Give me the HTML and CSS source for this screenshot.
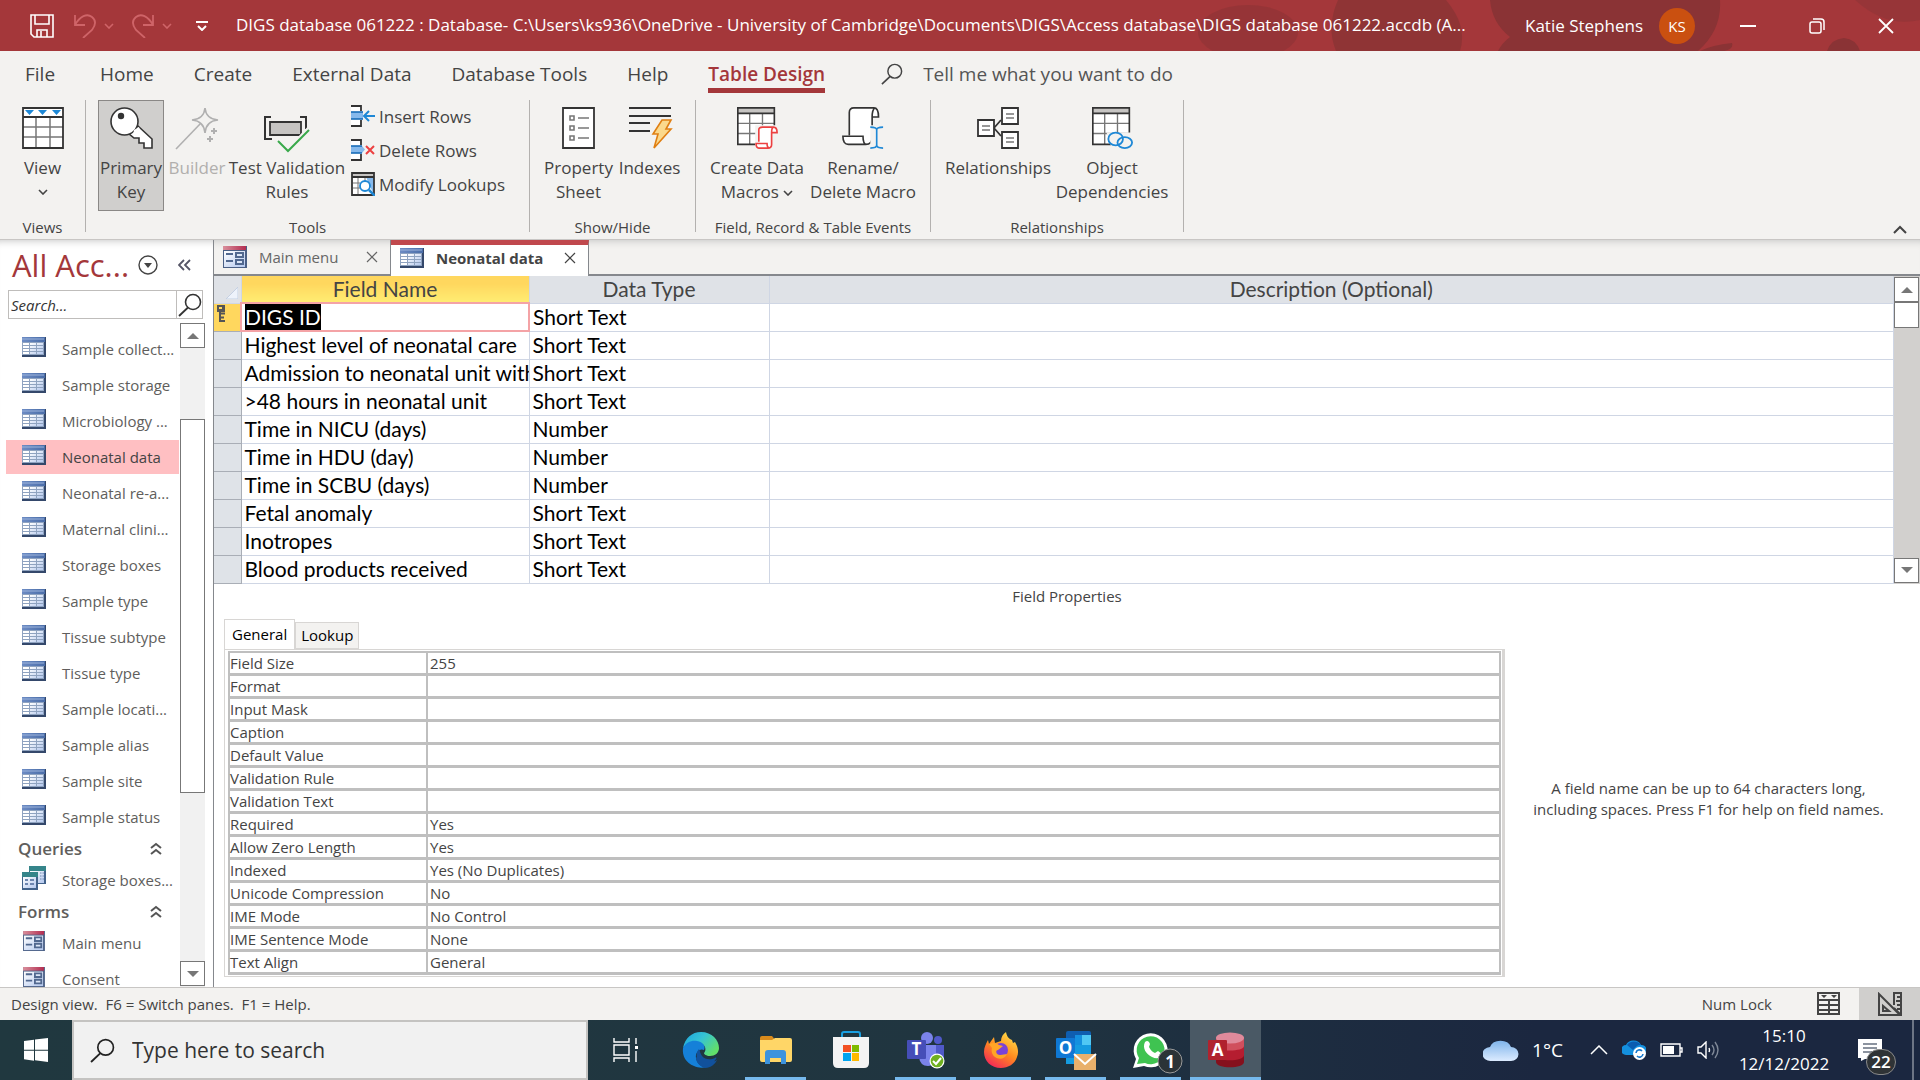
FILE: index.html
```
<!DOCTYPE html>
<html lang="en">
<head>
  <meta charset="UTF-8">
  <meta name="viewport" content="width=device-width, initial-scale=1.0">
  <title>DIGS database 061222</title>
  <link rel="stylesheet" href="styles.css">
</head>
<body>
  <!-- Shared icons -->
  <svg class="icon-defs" aria-hidden="true">
    <defs>
      <linearGradient id="cell" x1="0" y1="0" x2="1" y2="1"><stop offset="0" stop-color="#fff"/><stop offset="1" stop-color="#b4c8ee"/></linearGradient>
      <linearGradient id="head" x1="0" y1="0" x2="1" y2="0"><stop offset="0" stop-color="#6d8cc4"/><stop offset="1" stop-color="#4a6da8"/></linearGradient>
      <linearGradient id="form-head" x1="0" y1="0" x2="1" y2="0"><stop offset="0" stop-color="#d9909c"/><stop offset="1" stop-color="#b32c50"/></linearGradient>
    </defs>
    <symbol id="i-table" viewBox="0 0 24 20">
      <rect width="24" height="20" fill="#34486b"/>
      <rect width="22" height="18" fill="#8fa3c0"/>
      <rect width="23" height="5" fill="url(#head)"/>
      <path d="M0 2h22" stroke="#9db4dc" stroke-width="1"/>
      <path d="M1 6h6v2H1zM1 9h6v2H1zM1 12h6v2H1zM1 15h6v2H1z" fill="#fff"/>
      <path d="M8 6h6v2H8zM15 6h6v2h-6zM8 9h6v2H8zM15 9h6v2h-6zM8 12h6v2H8zM15 12h6v2h-6zM8 15h6v2H8zM15 15h6v2h-6z" fill="url(#cell)"/>
    </symbol>
    <symbol id="i-form" viewBox="0 0 24 22">
      <rect width="24" height="22" fill="#4a5f85"/>
      <rect x="1" y="5" width="21" height="16" fill="url(#cell)"/>
      <rect width="23" height="4" fill="url(#form-head)"/>
      <path d="M3 8h7M3 15h7" stroke="#51688f" stroke-width="2"/>
      <path d="M13 7h7v4h-7zM13 14h7v4h-7z" fill="#dce6f7" stroke="#51688f" stroke-width="2"/>
    </symbol>
    <symbol id="i-query" viewBox="0 0 24 24">
      <rect x="7" width="17" height="18" fill="#42628b"/>
      <rect x="8" y="5" width="14" height="12" fill="url(#cell)"/>
      <rect x="7" width="17" height="5" fill="#35858a"/>
      <path d="M18 7h4M18 10h4M18 13h4" stroke="#6d86b0" stroke-dasharray="1.500 1"/>
      <rect y="6" width="16" height="18" fill="#42628b"/>
      <rect x="1" y="11" width="13" height="11" fill="url(#cell)"/>
      <rect y="6" width="16" height="5" fill="#35858a"/>
      <path d="M3 14h3M8 14h4M3 18h3M8 18h4" stroke="#6d86b0" stroke-width="2"/>
    </symbol>
    <symbol id="i-search" viewBox="0 0 24 24">
      <circle cx="15" cy="9" r="7.500" fill="none" stroke="currentColor" stroke-width="1.600"/>
      <path d="M10 14.500 1 23" stroke="currentColor" stroke-width="1.800"/>
    </symbol>
    <symbol id="i-up" viewBox="0 0 12 6"><path d="M6 0l6 6H0z" fill="#777"/></symbol>
    <symbol id="i-down" viewBox="0 0 12 6"><path d="M0 0h12L6 6z" fill="#777"/></symbol>
    <symbol id="i-chevron" viewBox="0 0 10 6"><path d="M1 1l4 4 4-4" fill="none" stroke="currentColor" stroke-width="1.600"/></symbol>
    <symbol id="i-collapse" viewBox="0 0 12 14"><path d="M1 6l5-4 5 4M1 12l5-4 5 4" fill="none" stroke="#555" stroke-width="2"/></symbol>
    <symbol id="i-close" viewBox="0 0 12 12"><path d="M1 1l10 10M11 1L1 11" fill="none" stroke="currentColor" stroke-width="1.200"/></symbol>
  </svg>

  <!-- Title bar -->
  <header class="titlebar">
    <svg class="titlebar-art" viewBox="0 0 740 51" preserveAspectRatio="xMaxYMid slice" aria-hidden="true">
      <g fill="#8a3335">
        <path d="M310 0h230q2 30-22 51H318q4-8 12-14-18-14-20-37z"/>
        <path d="M158 0h108q22 26 14 51H156q-10-24 2-51z" opacity=".8"/>
        <ellipse cx="68" cy="32" rx="50" ry="27" opacity=".55"/>
        <path d="M520 51q12-6 32-8 2 6-8 8zM647 51q4-12 17-13 12 1 16 13z"/>
        <path d="M675 0h65v20q-34 8-65-20z" opacity=".5"/>
      </g>
    </svg>
    <div class="quick">
      <button class="bare" aria-label="Save"><svg width="24" height="24" viewBox="0 0 24 24" fill="none" stroke="#fff" stroke-width="1.600"><path d="M1 1h22v22H4l-3-3zM5 1v9h14V1M7 23v-7h10v7M11 17v6"/></svg></button>
      <button class="bare faded undo" aria-label="Undo"><svg width="22" height="24" viewBox="0 0 22 24" fill="none" stroke="currentColor" stroke-width="1.800"><path d="M1 1v10h10M1 11C6 2 13-1 18 3s3 9 0 13l-9 8"/></svg></button>
      <button class="bare faded" aria-label="Undo list"><svg width="10" height="6"><use href="#i-chevron"/></svg></button>
      <button class="bare faded redo" aria-label="Redo"><svg width="22" height="24" viewBox="0 0 22 24" fill="none" stroke="currentColor" stroke-width="1.800"><path d="M21 1v10H11M21 11C16 2 9-1 4 3s-3 9 0 13l9 8"/></svg></button>
      <button class="bare faded" aria-label="Redo list"><svg width="10" height="6"><use href="#i-chevron"/></svg></button>
      <button class="bare customize" aria-label="Customize toolbar"><svg width="12" height="10" viewBox="0 0 12 10" fill="none" stroke="#fff" stroke-width="2"><path d="M0 1h12M2 5l4 4 4-4"/></svg></button>
    </div>
    <div class="title">DIGS database 061222 : Database- C:\Users\ks936\OneDrive - University of Cambridge\Documents\DIGS\Access database\DIGS database 061222.accdb (A...</div>
    <div class="account">
      <span>Katie Stephens</span>
      <span class="avatar">KS</span>
    </div>
    <div class="window-buttons">
      <button class="bare" aria-label="Minimize"><svg width="16" height="16" viewBox="0 0 16 16"><path d="M0 8h16" stroke="#fff" stroke-width="2"/></svg></button>
      <button class="bare" aria-label="Restore"><svg width="16" height="16" viewBox="0 0 16 16" fill="none" stroke="#fff" stroke-width="1.500"><rect x="1" y="4" width="11" height="11" rx="2"/><path d="M4 1h8q3 0 3 3v8"/></svg></button>
      <button class="bare" aria-label="Close"><svg width="16" height="16" viewBox="0 0 16 16"><path d="M1 1l14 14M15 1L1 15" stroke="#fff" stroke-width="1.800"/></svg></button>
    </div>
  </header>

  <!-- Ribbon -->
  <nav class="tabs">
    <a href="#" class="file">File</a>
    <a href="#">Home</a>
    <a href="#">Create</a>
    <a href="#">External Data</a>
    <a href="#">Database Tools</a>
    <a href="#">Help</a>
    <a href="#" class="active">Table Design</a>
    <label class="tell-me">
      <svg width="22" height="22"><use href="#i-search"/></svg>
      <input type="text" placeholder="Tell me what you want to do">
    </label>
  </nav>

  <section class="ribbon">
    <div class="group views">
      <div class="tools">
        <button class="tool">
          <svg width="42" height="42" viewBox="0 0 42 42"><path d="M1 1h40v40H1z" fill="#fff"/><path d="M14 10v31M28 10v31M1 20h40M1 30h40" stroke="#777" stroke-width="1.500"/><path d="M1 1h40v40H1zM1 10h40" fill="none" stroke="#333" stroke-width="1.800"/><path d="M3 3h9L7.500 8zM16 3h9l-4.500 5zM30 3h9l-4.500 5z" fill="#1e88d6"/></svg>
          <span>View</span>
          <svg class="drop" width="10" height="6"><use href="#i-chevron"/></svg>
        </button>
      </div>
      <div class="group-name">Views</div>
    </div>

    <div class="group design">
      <div class="tools">
        <button class="tool pressed">
          <svg width="42" height="42" viewBox="0 0 42 42"><path d="M28 19l14 13v9h-8v-5h-5v-5h-5l-6-5z" fill="#fff" stroke="#333" stroke-width="1.600"/><circle cx="14.500" cy="14.500" r="13.500" fill="#fff" stroke="#333" stroke-width="1.600"/><path d="M24 23l5-3 1 4-7 4z" fill="#fff"/><circle cx="11" cy="9" r="3.200" fill="#333"/></svg>
          <span>Primary<br>Key</span>
        </button>
        <button class="tool disabled">
          <svg width="42" height="42" viewBox="0 0 42 42" fill="none" stroke="#b0b0b0" stroke-width="1.600"><path d="M0 42l25-26"/><path d="M29 1q1 11 13 12-12 1-13 13-1-12-13-13 12-1 13-12z" fill="#f3f2f0"/><path d="M38 21v6M35 24h6M34 29v6M31 32h6" stroke-width="2"/></svg>
          <span>Builder</span>
        </button>
        <button class="tool validation">
          <svg width="46" height="42" viewBox="0 0 46 42" fill="none"><path d="M7 10H1v22h7M36 10h6v12" stroke="#333" stroke-width="2"/><path d="M6 15h31v13H6z" fill="#c6c4c2" stroke="#333" stroke-width="1.800"/><path d="M14 33l10 11 21-22" stroke="#f3f2f0" stroke-width="5"/><path d="M14 34l10 10 21-21" stroke="#39a94b" stroke-width="2"/></svg>
          <span>Test Validation<br>Rules</span>
        </button>
        <div class="row-tools">
          <button class="bare"><svg width="24" height="24" viewBox="0 0 24 24"><path d="M0 2h10v20H0" fill="#fff" stroke="#333" stroke-width="1.800"/><path d="M0 7h14v9H0z" fill="#f3f2f0"/><path d="M0 8h12v7H0z" fill="#86b9ec"/><path d="M0 8h12M0 15h12" stroke="#0f67b5" stroke-width="1.500"/><path d="M24 12H14M18 7l-5 5 5 5" fill="none" stroke="#1e88d6" stroke-width="2"/></svg>Insert Rows</button>
          <button class="bare"><svg width="24" height="24" viewBox="0 0 24 24"><path d="M0 2h10v20H0" fill="#fff" stroke="#333" stroke-width="1.800"/><path d="M0 7h14v9H0z" fill="#f3f2f0"/><path d="M0 8h11l3 3.500-3 3.500H0z" fill="#86b9ec"/><path d="M0 8h11M0 15h11" stroke="#0f67b5" stroke-width="1.500"/><path d="M15 8l8 8M23 8l-8 8" fill="none" stroke="#ec4141" stroke-width="2"/></svg>Delete Rows</button>
          <button class="bare"><svg width="24" height="24" viewBox="0 0 24 24"><path d="M1 1h22v22H1z" fill="#fff"/><path d="M15 5h8v18z" fill="#86b9ec"/><path d="M7 6v16M2 11h7M2 16h7M14 6v4" stroke="#777"/><path d="M1 1h22v4H1z" fill="#c6c4c2"/><path d="M1 1h22v22H1zM1 5h22" fill="none" stroke="#333" stroke-width="1.800"/><circle cx="14" cy="14" r="5" fill="#fff" stroke="#1e88d6" stroke-width="1.800"/><path d="M18 18l6 6" stroke="#1e88d6" stroke-width="2.500"/></svg>Modify Lookups</button>
        </div>
      </div>
      <div class="group-name">Tools</div>
    </div>

    <div class="group show-hide">
      <div class="tools">
        <button class="tool">
          <svg width="42" height="42" viewBox="0 0 42 42" fill="none"><path d="M5 1h31v40H5z" fill="#fff" stroke="#333" stroke-width="1.800"/><path d="M12 9h4v4h-4zM12 19h4v4h-4zM12 29h4v4h-4zM20 11h11M20 21h11M20 31h11" stroke="#777" stroke-width="1.600"/></svg>
          <span>Property<br>Sheet</span>
        </button>
        <button class="tool">
          <svg width="42" height="42" viewBox="0 0 42 42"><path d="M0 1h42M0 9h42M0 16h21M0 24h21" stroke="#333" stroke-width="1.800"/><path d="M33 13h9l-5 9h5L25 41l4-14h-5z" fill="#fbd98c" stroke="#e07f12" stroke-width="1.600"/></svg>
          <span>Indexes</span>
        </button>
      </div>
      <div class="group-name">Show/Hide</div>
    </div>

    <div class="group events">
      <div class="tools">
        <button class="tool">
          <svg width="46" height="46" viewBox="0 0 46 46" fill="none"><path d="M2 1h40v40H2z" fill="#fff"/><path d="M2 1h40v6H2z" fill="#c6c4c2"/><path d="M15 7v34M29 7v34M2 18h40M2 29h40" stroke="#777" stroke-width="1.500"/><path d="M2 1h40v40H2zM2 7h40" stroke="#333" stroke-width="1.800"/><path d="M21 20h26v26H21z" fill="#f3f2f0"/><path d="M25 38V25q0-3 4-3h12q4 0 4 6h-6v13q0 4-4 4H25q-3 0-3-5h12q0 5 3 5M41 22q-2 1-2 6" fill="#fff" stroke="#ec4141" stroke-width="1.800"/></svg>
          <span>Create Data<br>Macros <svg width="10" height="6"><use href="#i-chevron"/></svg></span>
        </button>
        <button class="tool">
          <svg width="46" height="46" viewBox="0 0 46 46" fill="none"><path d="M8 31V6q0-5 5-5h22q5 0 5 10h-7v22q0 8-7 8H7q-6 0-6-9h22q0 9 4 9M36 1q-3 2-3 10" fill="#fff" stroke="#333" stroke-width="1.800"/><path d="M31 20h16v26H31z" fill="#f3f2f0"/><path d="M31 22q7 0 7 3v17q0 3-7 3M45 22q-7 0-7 3v17q0 3 7 3" stroke="#1e88d6" stroke-width="1.800"/></svg>
          <span>Rename/<br>Delete Macro</span>
        </button>
      </div>
      <div class="group-name">Field, Record &amp; Table Events</div>
    </div>

    <div class="group relations">
      <div class="tools">
        <button class="tool">
          <svg width="42" height="42" viewBox="0 0 42 42"><g fill="#fff" stroke="#333" stroke-width="1.800"><path d="M17 21l7-8M17 21l7 8" fill="none"/><path d="M1 13h16v16H1zM25 1h16v16H25zM25 25h16v16H25z"/></g><path d="M5 19h8M5 23h8M29 7h8M29 11h8M29 31h8M29 35h8" stroke="#777" stroke-width="1.500"/></svg>
          <span>Relationships</span>
        </button>
        <button class="tool">
          <svg width="46" height="46" viewBox="0 0 46 46" fill="none"><path d="M2 1h40v40H2z" fill="#fff"/><path d="M2 1h40v6H2z" fill="#c6c4c2"/><path d="M15 7v34M29 7v34M2 18h40M2 29h40" stroke="#777" stroke-width="1.500"/><path d="M2 1h40v40H2zM2 7h40" stroke="#333" stroke-width="1.800"/><path d="M17 28h30v18H23z" fill="#f3f2f0"/><g stroke="#1e88d6" stroke-width="2"><ellipse cx="27" cy="35" rx="8" ry="7"/><ellipse cx="37" cy="39" rx="8" ry="6"/></g></svg>
          <span>Object<br>Dependencies</span>
        </button>
      </div>
      <div class="group-name">Relationships</div>
    </div>

    <button class="bare collapse" aria-label="Collapse ribbon"><svg width="14" height="9" viewBox="0 0 14 9"><path d="M1 8l6-6 6 6" fill="none" stroke="#444" stroke-width="2"/></svg></button>
  </section>

  <main class="workspace">
    <!-- Navigation pane -->
    <aside class="nav-pane">
      <div class="nav-title">
        <h1>All Acc...</h1>
        <button class="bare" aria-label="Object filter"><svg width="20" height="20" viewBox="0 0 20 20"><circle cx="10" cy="10" r="9" fill="none" stroke="#444" stroke-width="1.400"/><path d="M6 8h8l-4 5z" fill="#444"/></svg></button>
        <button class="bare shutter" aria-label="Hide pane"><svg width="13" height="12" viewBox="0 0 13 12" fill="none" stroke="#555566" stroke-width="1.800"><path d="M6 1L1 6l5 5M12 1L7 6l5 5"/></svg></button>
      </div>
      <div class="nav-search">
        <input type="text" placeholder="Search..." aria-label="Search">
        <button class="bare" aria-label="Run search"><svg width="24" height="24"><use href="#i-search"/></svg></button>
      </div>
      <div class="nav-body">
        <div class="nav-list">
          <a href="#"><svg width="24" height="20"><use href="#i-table"/></svg>Sample collect...</a>
          <a href="#"><svg width="24" height="20"><use href="#i-table"/></svg>Sample storage</a>
          <a href="#"><svg width="24" height="20"><use href="#i-table"/></svg>Microbiology ...</a>
          <a href="#" class="selected"><svg width="24" height="20"><use href="#i-table"/></svg>Neonatal data</a>
          <a href="#"><svg width="24" height="20"><use href="#i-table"/></svg>Neonatal re-a...</a>
          <a href="#"><svg width="24" height="20"><use href="#i-table"/></svg>Maternal clini...</a>
          <a href="#"><svg width="24" height="20"><use href="#i-table"/></svg>Storage boxes</a>
          <a href="#"><svg width="24" height="20"><use href="#i-table"/></svg>Sample type</a>
          <a href="#"><svg width="24" height="20"><use href="#i-table"/></svg>Tissue subtype</a>
          <a href="#"><svg width="24" height="20"><use href="#i-table"/></svg>Tissue type</a>
          <a href="#"><svg width="24" height="20"><use href="#i-table"/></svg>Sample locati...</a>
          <a href="#"><svg width="24" height="20"><use href="#i-table"/></svg>Sample alias</a>
          <a href="#"><svg width="24" height="20"><use href="#i-table"/></svg>Sample site</a>
          <a href="#"><svg width="24" height="20"><use href="#i-table"/></svg>Sample status</a>
          <h2>Queries <svg width="12" height="14"><use href="#i-collapse"/></svg></h2>
          <a href="#"><svg width="24" height="24"><use href="#i-query"/></svg>Storage boxes...</a>
          <h2>Forms <svg width="12" height="14"><use href="#i-collapse"/></svg></h2>
          <a href="#"><svg width="24" height="20"><use href="#i-form"/></svg>Main menu</a>
          <a href="#"><svg width="24" height="20"><use href="#i-form"/></svg>Consent</a>
        </div>
        <div class="scrollbar nav-scroll">
          <button aria-label="Scroll up"><svg width="12" height="6"><use href="#i-up"/></svg></button>
          <div class="track"><div class="thumb"></div></div>
          <button aria-label="Scroll down"><svg width="12" height="6"><use href="#i-down"/></svg></button>
        </div>
      </div>
    </aside>

    <!-- Open table -->
    <section class="document">
      <div class="doc-tabs">
        <div class="doc-tab">
          <svg width="24" height="22"><use href="#i-form"/></svg>
          <span>Main menu</span>
          <button class="bare" aria-label="Close Main menu"><svg width="12" height="12"><use href="#i-close"/></svg></button>
        </div>
        <div class="doc-tab current">
          <svg width="24" height="20"><use href="#i-table"/></svg>
          <span>Neonatal data</span>
          <button class="bare" aria-label="Close Neonatal data"><svg width="12" height="12"><use href="#i-close"/></svg></button>
        </div>
      </div>

      <div class="grid-area">
        <table class="fields">
          <thead>
            <tr><th class="selector"><svg width="12" height="12" viewBox="0 0 12 12"><path d="M12 0v12H0z" fill="#eef3fb" stroke="#c5d0e2"/></svg></th><th class="name active">Field Name</th><th class="type">Data Type</th><th>Description (Optional)</th></tr>
          </thead>
          <tbody>
            <tr class="key"><td><svg width="10" height="18" viewBox="0 0 10 18"><path d="M0 0h8v7H0z" fill="#555"/><path d="M2 2h3v2H2z" fill="#ffd75e"/><path d="M3 7v10M3 8.500h5M3 12.500h4M3 16h5" stroke="#555" stroke-width="2"/></svg></td><td><mark>DIGS ID</mark></td><td>Short Text</td><td></td></tr>
            <tr><td></td><td>Highest level of neonatal care</td><td>Short Text</td><td></td></tr>
            <tr><td></td><td>Admission to neonatal unit with</td><td>Short Text</td><td></td></tr>
            <tr><td></td><td>&gt;48 hours in neonatal unit</td><td>Short Text</td><td></td></tr>
            <tr><td></td><td>Time in NICU (days)</td><td>Number</td><td></td></tr>
            <tr><td></td><td>Time in HDU (day)</td><td>Number</td><td></td></tr>
            <tr><td></td><td>Time in SCBU (days)</td><td>Number</td><td></td></tr>
            <tr><td></td><td>Fetal anomaly</td><td>Short Text</td><td></td></tr>
            <tr><td></td><td>Inotropes</td><td>Short Text</td><td></td></tr>
            <tr><td></td><td>Blood products received</td><td>Short Text</td><td></td></tr>
          </tbody>
        </table>
        <div class="scrollbar grid-scroll">
          <button aria-label="Scroll up"><svg width="12" height="6"><use href="#i-up"/></svg></button>
          <div class="track"><div class="thumb"></div></div>
          <button aria-label="Scroll down"><svg width="12" height="6"><use href="#i-down"/></svg></button>
        </div>
      </div>

      <h2 class="props-title">Field Properties</h2>
      <div class="props">
        <div class="props-left">
          <div class="props-tabs">
            <button class="on">General</button>
            <button>Lookup</button>
          </div>
          <div class="props-frame">
            <table class="props-table">
              <tr><th>Field Size</th><td>255</td></tr>
              <tr><th>Format</th><td></td></tr>
              <tr><th>Input Mask</th><td></td></tr>
              <tr><th>Caption</th><td></td></tr>
              <tr><th>Default Value</th><td></td></tr>
              <tr><th>Validation Rule</th><td></td></tr>
              <tr><th>Validation Text</th><td></td></tr>
              <tr><th>Required</th><td>Yes</td></tr>
              <tr><th>Allow Zero Length</th><td>Yes</td></tr>
              <tr><th>Indexed</th><td>Yes (No Duplicates)</td></tr>
              <tr><th>Unicode Compression</th><td>No</td></tr>
              <tr><th>IME Mode</th><td>No Control</td></tr>
              <tr><th>IME Sentence Mode</th><td>None</td></tr>
              <tr><th>Text Align</th><td>General</td></tr>
            </table>
          </div>
        </div>
        <p class="hint">A field name can be up to 64 characters long,<br>including spaces. Press F1 for help on field names.</p>
      </div>
    </section>
  </main>

  <footer class="status">
    <span class="message">Design view.&nbsp; F6 = Switch panes.&nbsp; F1 = Help.</span>
    <span>Num Lock</span>
    <div class="view-buttons">
      <button class="bare" aria-label="Datasheet view"><svg width="24" height="24" viewBox="0 0 24 24" fill="none" stroke="#444" stroke-width="2"><path d="M1 1h21v21H1zM1 8h21M1 13h21M1 18h21M12 8v14"/><path d="M4 3h6L7 6zM14 3h6l-3 3z" fill="#444" stroke="none"/></svg></button>
      <button class="bare active" aria-label="Design view"><svg width="24" height="24" viewBox="0 0 24 24" fill="none" stroke="#444" stroke-width="2"><path d="M1 2v21h21zM5 14v5h6zM16 13V1h7v22l-7-7M23 5h-4M23 9h-5M23 13h-4M23 17h-4"/></svg></button>
    </div>
  </footer>

  <!-- Windows taskbar -->
  <div class="taskbar">
    <button class="bare start" aria-label="Start"><svg width="24" height="24" viewBox="0 0 24 24" fill="#fff"><path d="M0 3l10-1.300v10H0zM11 1.500L24 0v11.700H11zM0 12.700h10v10L0 21.300zM11 12.700h13V24l-13-1.800z"/></svg></button>
    <label class="task-search">
      <svg width="25" height="25"><use href="#i-search"/></svg>
      <input type="text" placeholder="Type here to search">
    </label>
    <div class="apps">
      <button class="bare" aria-label="Task view"><svg width="26" height="24" viewBox="0 0 26 24" fill="none" stroke="#fff" stroke-width="1.400"><path d="M1 0v4h15V0M1 24v-4h15v4M1 7h15v10H1zM23 0v6M23 13v11"/><path d="M22 8h3v3h-3z" fill="#fff" stroke="none"/></svg></button>
      <button class="bare" aria-label="Edge"><svg width="38" height="38" viewBox="0 0 38 38">
        <defs><linearGradient id="edge-a" x1="0" y1="0" x2="1" y2=".6"><stop offset="0" stop-color="#1aa3df"/><stop offset=".5" stop-color="#36c3d4"/><stop offset="1" stop-color="#62e06a"/></linearGradient></defs>
        <path d="M1 17C3 7 10 1 19 1c11 0 18 8 18 16 0 5-4 8-9 8-4 0-6-2-6-3 1-1 2-3 1-6-2-5-16-7-22 1z" fill="url(#edge-a)"/>
        <path d="M1 17C4 11 10 9 15 10c6 1 9 5 7 9-4-2-9 2-8 8 1 6 6 9 10 9-3 1-8 1-12-1C4 32 0 25 1 17z" fill="#1580d8"/>
        <path d="M17 18c-4 4-3 12 3 15 5 2 11 0 14-5 1-1 0-2-1-1-4 2-10 2-13-2-2-3-2-5-3-7zM14 27c0 5 5 9 9 10 6 0 10-4 12-8-8 5-17 4-19-5z" fill="#11519c"/></svg></button>
      <button class="bare open" aria-label="File Explorer"><svg width="32" height="28" viewBox="0 0 32 28"><path d="M0 2q0-2 2-2h10l4 5H0z" fill="#d98b1c"/><path d="M0 4h12l3-2h15q2 0 2 2v20q0 2-2 2H2q-2 0-2-2z" fill="#ffd667"/><path d="M5 28V17q0-3 3-3h15q3 0 3 3v11h-5v-6H10v6z" fill="#3d93dd"/></svg></button>
      <button class="bare" aria-label="Microsoft Store"><svg width="36" height="38" viewBox="0 0 36 38"><path d="M9 8V3q0-2 2-2h14q2 0 2 2v5" fill="none" stroke="#1aa0e2" stroke-width="2"/><path d="M0 6h36v26q0 5-5 5H5q-5 0-5-5z" fill="#f3f3f3"/><path d="M10 14h8v7h-8z" fill="#f25022"/><path d="M19 14h7v7h-7z" fill="#7fba00"/><path d="M10 22h8v8h-8z" fill="#00a4ef"/><path d="M19 22h7v8h-7z" fill="#ffb900"/></svg></button>
      <button class="bare open" aria-label="Teams"><svg width="38" height="38" viewBox="0 0 38 38"><circle cx="20" cy="7" r="6" fill="#7b83eb"/><circle cx="31" cy="9" r="4" fill="#5059c9"/><path d="M26 14h11v12q0 6-7 6h-4z" fill="#5059c9"/><path d="M12 14h17v12q0 9-8 9t-9-9z" fill="#7b83eb"/><rect y="9" width="19" height="19" rx="1" fill="#464eb8"/><text x="9.500" y="24" class="logo-letter">T</text><circle cx="30" cy="30" r="7.500" fill="#fff"/><circle cx="30" cy="30" r="6.300" fill="#6fb020"/><path d="M26 30l3 3 5-6" fill="none" stroke="#fff" stroke-width="2"/></svg></button>
      <button class="bare open" aria-label="Firefox"><svg width="36" height="38" viewBox="0 0 36 38">
        <defs><linearGradient id="fox" x1=".8" y1="0" x2=".2" y2="1"><stop offset="0" stop-color="#ffe14a"/><stop offset=".5" stop-color="#ff8a1f"/><stop offset="1" stop-color="#f2205c"/></linearGradient></defs>
        <path d="M23 1c1 5 3 7 6 8l1 3 2-1c3 5 4 10 2 15-2 7-9 11-16 11C8 37 1 30 1 21c0-5 2-8 4-12l1 4 5-7 1 6 6-2c0-4 2-7 5-9z" fill="url(#fox)"/><circle cx="18" cy="19" r="7" fill="#7a42d8"/><path d="M6 13c4-2 8-1 10 1l4 1-5 4c-3 0-2 5 2 5 3 0 5-1 7-1-2 5-8 6-12 3-3-2-4-6-3-9z" fill="#ffa526"/></svg></button>
      <button class="bare open" aria-label="Outlook"><svg width="40" height="40" viewBox="0 0 40 40"><rect x="10" y="1" width="25" height="31" rx="2" fill="#0f5eb0"/><path d="M19 5h7v11h-7z" fill="#1490df"/><path d="M26 5h9v11h-9z" fill="#50c8f4"/><path d="M10 15h25v19H10z" fill="#159be0"/><rect y="8" width="19" height="20" rx="1" fill="#0f78d4"/><text x="9.500" y="24" class="logo-letter">O</text><path d="M18 24h22v16H18z" fill="#e9b06b"/><path d="M18 24l11 10 11-10" fill="none" stroke="#fff" stroke-width="2"/></svg></button>
      <button class="bare open" aria-label="WhatsApp"><svg width="38" height="38" viewBox="0 0 38 38"><path d="M1 37l3-9A17 17 0 1 1 12 35z" fill="#fff"/><path d="M5 33l2-6a14 14 0 1 1 6 5z" fill="#3fc351"/><path d="M13 11c2-2 4-1 5 2l-1 3c2 4 4 5 6 6l3-2 4 3c-1 5-6 5-10 3-6-3-10-9-7-15z" fill="#fff"/><circle cx="38" cy="30" r="12" fill="#2b3337" stroke="#9a9a9a"/><text x="38" y="37" class="logo-letter">1</text></svg></button>
      <button class="bare open front" aria-label="Access"><svg width="36" height="36" viewBox="0 0 36 36"><path d="M8 5v25c0 7 28 7 28 0V5z" fill="#85101d"/><path d="M8 5v18c0 7 28 7 28 0V5z" fill="#b51d30"/><path d="M8 5v9c0 6 28 6 28 0V5z" fill="#d04f5d"/><ellipse cx="22" cy="6" rx="14" ry="5.500" fill="#e08a9b"/><rect y="8" width="19" height="20" rx="1" fill="#b0222e"/><text x="9.500" y="24" class="logo-letter">A</text></svg></button>
    </div>
    <div class="tray">
      <div class="weather"><svg width="36" height="24" viewBox="0 0 36 24"><defs><linearGradient id="sky" x1="0" y1="0" x2="0" y2="1"><stop offset="0" stop-color="#7fb4ea"/><stop offset="1" stop-color="#dcebff"/></linearGradient></defs><path d="M8 23a8 7 0 0 1-1-14A11 9 0 0 1 28 9a7.500 7 0 0 1 0 14z" fill="url(#sky)"/></svg><span>1°C</span></div>
      <button class="bare" aria-label="Hidden icons"><svg width="18" height="10" viewBox="0 0 18 10"><path d="M1 9l8-8 8 8" fill="none" stroke="#fff" stroke-width="1.500"/></svg></button>
      <svg width="24" height="20" viewBox="0 0 24 20"><path d="M4 15a5 5 0 0 1 0-10A8 7 0 0 1 19 5a5 5 0 0 1 1 10z" fill="#1490df"/><path d="M5 5a8 7 0 0 1 14 0c-4 0-6 2-8 5z" fill="#0a5cb0"/><circle cx="17.500" cy="13.500" r="6.500" fill="#fff"/><path d="M14 13a3.500 3.500 0 0 1 6-2M21 14a3.500 3.500 0 0 1-6 2" fill="none" stroke="#1577cc" stroke-width="1.600"/></svg>
      <svg width="23" height="14" viewBox="0 0 23 14"><path d="M1 1h19v12H1zM20 5h2v4h-2" fill="none" stroke="#fff" stroke-width="1.400"/><path d="M3 3h11v8H3z" fill="#fff"/></svg>
      <svg width="23" height="18" viewBox="0 0 23 18" fill="none" stroke="#fff" stroke-width="1.400"><path d="M1 6h3l5-5v16l-5-5H1zM12 7q1 2 0 4"/><path d="M15 4q4 5 0 10M18 1q6 8 0 16" stroke="#7f8897"/></svg>
      <div class="clock"><span>15:10</span><span>12/12/2022</span></div>
      <button class="bare notify" aria-label="Notifications"><svg width="24" height="22" viewBox="0 0 24 22"><path d="M0 0h24v20H7l-4 2v-3H0z" fill="#fff"/><path d="M5 5h14M5 9h14M5 13h9" stroke="#1b2840" stroke-width="1.200"/></svg><span class="badge">22</span></button>
      <div class="peek"></div>
    </div>
  </div>
</body>
</html>
```

FILE: styles.css
```
* {
  margin: 0;
  padding: 0;
  box-sizing: border-box;
}

body {
  font-family: "Open Sans", sans-serif;
  font-size: 15px;
  color: #444;
  background-color: #fff;
  display: flex;
  flex-direction: column;
  height: 100vh;
  overflow: hidden;
}

svg {
  display: block;
  flex: none;
}

a {
  color: inherit;
  text-decoration: none;
}

button,
input {
  font: inherit;
  color: inherit;
}

input {
  border: none;
  background: none;
  outline: none;
  min-width: 0;
}

.bare {
  border: none;
  background: none;
  display: flex;
  align-items: center;
  justify-content: center;
}

.icon-defs {
  position: absolute;
  width: 0;
  height: 0;
}

/* Title bar */
.titlebar {
  position: relative;
  flex: none;
  height: 51px;
  background-color: #a4373a;
  color: #fff;
  font-size: 17px;
  display: flex;
  align-items: center;
}

.titlebar-art {
  position: absolute;
  top: 0;
  right: 0;
  width: 740px;
  height: 51px;
}

.titlebar > div {
  position: relative;
}

.quick {
  display: flex;
  align-items: center;
  width: 236px;
  padding-left: 30px;
}

.faded {
  color: #cf6468;
}

.undo {
  margin: 0 8px 0 20px;
}

.redo {
  margin: 0 8px 0 18px;
}

.customize {
  margin-left: 24px;
}

.title {
  flex: 1;
  overflow: hidden;
  white-space: nowrap;
  padding-bottom: 2px;
}

.account {
  display: flex;
  align-items: center;
  gap: 16px;
  padding-right: 18px;
}

.avatar {
  width: 36px;
  height: 36px;
  border-radius: 50%;
  background-color: #ca5010;
  font-size: 15px;
  line-height: 36px;
  text-align: center;
}

.window-buttons {
  display: flex;
}

.window-buttons button {
  width: 69px;
  height: 51px;
}

/* Ribbon */
.tabs {
  flex: none;
  height: 49px;
  background-color: #f3f2f0;
  font-size: 19px;
  display: flex;
  align-items: flex-start;
  gap: 40px;
  padding: 8px 0 0 25px;
}

.tabs a {
  height: 34px;
  line-height: 30px;
}

.tabs .file {
  padding-right: 5px;
}

.tabs .active {
  color: #a4373a;
  font-weight: 600;
  border-bottom: 5px solid #a4373a;
}

.tell-me {
  display: flex;
  align-items: center;
  gap: 20px;
  height: 30px;
  padding-left: 16px;
}

.tell-me input {
  width: 300px;
}

.tell-me input::placeholder {
  color: #555;
}

.ribbon {
  flex: none;
  height: 140px;
  background-color: #f3f2f0;
  border-bottom: 1px solid #c8c6c4;
  display: flex;
}

.group {
  display: flex;
  flex-direction: column;
  justify-content: space-between;
  align-items: center;
  height: 132px;
  border-right: 1px solid #b3b1af;
}

.group-name {
  line-height: 10px;
}

.tools {
  display: flex;
  width: 100%;
  height: 111px;
}

.tool {
  border: 1px solid transparent;
  background: none;
  font-size: 17px;
  line-height: 24px;
  text-align: center;
  white-space: nowrap;
  width: 66px;
  height: 111px;
  display: flex;
  flex-direction: column;
  align-items: center;
  padding-top: 6px;
}

.tool > svg {
  margin-bottom: 7px;
  height: 42px;
  overflow: visible;
}

.tool span svg {
  display: inline-block;
  vertical-align: middle;
}

.tool .drop {
  height: 6px;
  margin-top: 9px;
}

.pressed {
  background-color: #d0cfcd;
  border-color: #8a8886;
}

.disabled {
  color: #b1afad;
}

.views {
  width: 86px;
}

.views .tools {
  justify-content: center;
}

.design {
  width: 444px;
}

.design .tools {
  padding-left: 12px;
}

.validation {
  width: 114px;
}

.row-tools {
  display: flex;
  flex-direction: column;
  gap: 10px;
  padding: 4px 0 0 7px;
  font-size: 17px;
}

.row-tools button {
  gap: 4px;
  height: 24px;
  justify-content: flex-start;
}

.show-hide {
  width: 166px;
}

.show-hide .tools {
  padding-left: 13px;
}

.show-hide .tool {
  width: 71px;
}

.events {
  width: 235px;
}

.events .tools {
  padding-left: 8px;
}

.events .tool {
  width: 106px;
}

.relations {
  width: 253px;
}

.relations .tools {
  padding-left: 10px;
}

.relations .tool {
  width: 114px;
}

.collapse {
  margin: auto 13px 5px auto;
}

/* Navigation pane */
.workspace {
  flex: 1;
  min-height: 0;
  display: flex;
}

.nav-pane {
  flex: none;
  width: 214px;
  border-right: 1px solid #85888d;
  box-shadow: inset 0 8px 8px -8px #bbb;
  display: flex;
  flex-direction: column;
}

.nav-title {
  display: flex;
  align-items: center;
  height: 50px;
  padding-left: 12px;
}

.nav-title h1 {
  width: 126px;
  color: #a4373a;
  font-size: 31px;
  font-weight: normal;
  white-space: nowrap;
}

.shutter {
  margin-left: 20px;
}

.nav-search {
  flex: none;
  width: 195px;
  height: 29px;
  margin-left: 8px;
  border: 1px solid #bfbdbb;
  display: flex;
  color: #333;
}

.nav-search input {
  flex: 1;
  padding-left: 2px;
}

.nav-search input::placeholder {
  color: #333;
  font-style: italic;
}

.nav-search button {
  width: 26px;
  border-left: 1px solid #bfbdbb;
}

.nav-body {
  flex: 1;
  min-height: 0;
  margin-top: 4px;
  display: flex;
}

.nav-list {
  width: 180px;
  padding: 8px 1px 0 6px;
  overflow: hidden;
  color: #605e5c;
}

.nav-list a {
  display: flex;
  align-items: center;
  gap: 16px;
  height: 36px;
  padding-left: 16px;
  white-space: nowrap;
  border: solid #fff;
  border-width: 1px 0;
}

.nav-list a svg {
  margin-bottom: 4px;
}

.nav-list .selected {
  background-color: #ffbfc2;
  color: #444;
}

.nav-list h2 {
  display: flex;
  align-items: center;
  justify-content: space-between;
  height: 27px;
  padding: 0 17px 0 12px;
  font-size: 17px;
  font-weight: 600;
}

.scrollbar {
  flex: none;
  width: 25px;
  display: flex;
  flex-direction: column;
}

.scrollbar button {
  height: 25px;
  border: 1px solid #777;
  background-color: #fff;
  display: flex;
  align-items: center;
  justify-content: center;
}

.track {
  flex: 1;
}

.thumb {
  border: 1px solid #777;
  background-color: #fff;
}

.nav-scroll {
  background-color: #f1f1f1;
  padding-bottom: 1px;
}

.nav-scroll .track {
  padding-top: 71px;
}

.nav-scroll .thumb {
  height: 69%;
}

/* Open table */
.document {
  flex: 1;
  min-width: 0;
  display: flex;
  flex-direction: column;
}

.doc-tabs {
  flex: none;
  height: 36px;
  background-color: #f3f2f0;
  border-bottom: 2px solid #85888d;
  box-shadow: inset 0 8px 8px -8px #bbb;
  display: flex;
}

.doc-tab {
  width: 177px;
  height: 34px;
  border-right: 1px solid #85888d;
  color: #666;
  display: flex;
  align-items: center;
  padding: 0 12px 0 9px;
}

.doc-tab span {
  flex: 1;
  padding-left: 12px;
}

.doc-tab button {
  width: 12px;
}

.doc-tab.current {
  width: 198px;
  height: 36px;
  border-top: 5px solid #c0484d;
  padding-bottom: 5px;
  background-color: #fff;
  color: #444;
  font-weight: bold;
}

.grid-area {
  flex: none;
  display: flex;
}

.fields {
  flex: 1;
  width: 100%;
  min-width: 0;
  border-collapse: collapse;
  table-layout: fixed;
  font-family: Lato, sans-serif;
  font-size: 21px;
  color: #000;
}

.fields th,
.fields td {
  height: 28px;
  line-height: 26px;
  white-space: nowrap;
  overflow: hidden;
  border: 1px solid #cfd6e4;
}

.fields th {
  height: 27px;
  background-color: #dfe2e7;
  color: #444;
  font-weight: normal;
  border-top: none;
}

.fields td {
  padding-left: 3px;
}

.fields .selector {
  width: 27px;
  border-left: none;
}

.fields .selector svg {
  margin: 8px 0 0 12px;
}

.fields .name {
  width: 288px;
}

.fields .type {
  width: 240px;
}

.fields .active {
  background: linear-gradient(#ffd75e, #ffd75e 30%, #ffec72);
}

.fields td:first-child {
  background-color: #dfe3e8;
  border-color: #a9aeb6;
  border-left: none;
}

.fields .key td:first-child {
  background-color: #ffd75e;
}

.fields .key svg {
  margin-bottom: 6px;
}

.fields .key td:nth-child(2) {
  border: 2px solid #f4a3a6;
}

.fields mark {
  display: block;
  width: fit-content;
  background-color: #000;
  color: #fff;
}

.grid-scroll {
  width: 26px;
  padding: 1px 1px 1px 0;
  background-color: #d2d0ce;
}

.grid-scroll .thumb {
  height: 26px;
}

.props-title {
  flex: none;
  font-size: 15px;
  font-weight: normal;
  line-height: 24px;
  text-align: center;
}

.props {
  display: flex;
  padding-left: 10px;
}

.props-left {
  flex: 1;
  padding-top: 11px;
}

.props-tabs {
  display: flex;
  align-items: flex-end;
  height: 30px;
}

.props-tabs button {
  height: 27px;
  padding: 0 5px;
  border: 1px solid #d8d6d4;
  background-color: #f3f2f0;
  color: #000;
  line-height: 24px;
}

.props-tabs .on {
  height: 30px;
  padding: 0 7px;
  border-bottom: none;
  background-color: #fff;
}

.props-frame {
  border: 1px solid #d8d6d4;
  border-right-width: 3px;
  padding: 1px 1px 1px 3px;
}

.props-table {
  width: 100%;
  border-spacing: 0;
  border: solid #bfbfbf;
  border-width: 2px 2px 0;
}

.props-table th,
.props-table td {
  height: 23px;
  line-height: 20px;
  font-weight: normal;
  text-align: left;
  white-space: nowrap;
  border-bottom: 3px solid #bfbfbf;
}

.props-table th {
  width: 198px;
  border-right: 2px solid #bfbfbf;
}

.props-table td {
  padding-left: 2px;
}

.hint {
  width: 415px;
  padding: 14px 8px 0 0;
  align-self: center;
  line-height: 21px;
  text-align: center;
}

/* Status bar */
.status {
  flex: none;
  height: 33px;
  background-color: #f3f2f0;
  border-top: 1px solid #c8c6c4;
  display: flex;
  align-items: center;
  padding-left: 11px;
}

.message {
  flex: 1;
}

.view-buttons {
  display: flex;
  margin-left: 26px;
}

.view-buttons button {
  width: 61px;
  height: 32px;
}

.view-buttons .active {
  background-color: #d0cfcd;
}

/* Taskbar */
.taskbar {
  flex: none;
  height: 60px;
  background: linear-gradient(90deg, #20383f, #203540 50%, #1b2740 80%);
  color: #fff;
  display: flex;
}

.start {
  width: 72px;
}

.task-search {
  width: 516px;
  background-color: #f1f1f1;
  border: 2px solid #c4c3c1;
  color: #222;
  font-size: 21px;
  display: flex;
  align-items: center;
  gap: 17px;
  padding-left: 16px;
}

.task-search input {
  flex: 1;
}

.task-search input::placeholder {
  color: #333;
}

.apps {
  display: flex;
}

.apps button {
  width: 75px;
  height: 60px;
}

.apps svg {
  overflow: visible;
}

.apps .open {
  background: linear-gradient(#76b9ed, #76b9ed) center bottom / 61px 3px no-repeat;
}

.apps .front {
  width: 71px;
  margin-left: 2px;
  background-color: #4a5965;
  background-size: 71px 3px;
}

.logo-letter {
  fill: #fff;
  font-size: 17px;
  font-weight: bold;
  text-anchor: middle;
}

.tray {
  margin-left: auto;
  display: flex;
  align-items: center;
  gap: 14px;
}

.weather {
  display: flex;
  align-items: center;
  gap: 13px;
  margin-right: 13px;
  font-size: 19px;
}

.clock {
  width: 100px;
  font-size: 17px;
  line-height: 28px;
  text-align: center;
  display: flex;
  flex-direction: column;
}

.notify {
  position: relative;
  margin: 0 16px 0 10px;
}

.badge {
  position: absolute;
  top: 10px;
  left: 8px;
  width: 30px;
  height: 26px;
  border: 1px solid #8a8a8a;
  border-radius: 13px;
  background-color: #2f3336;
  color: #fff;
  font-size: 17px;
  font-weight: 600;
  line-height: 24px;
  text-align: center;
}

.peek {
  width: 8px;
  height: 60px;
  border-left: 2px solid #6d7585;
}
```
